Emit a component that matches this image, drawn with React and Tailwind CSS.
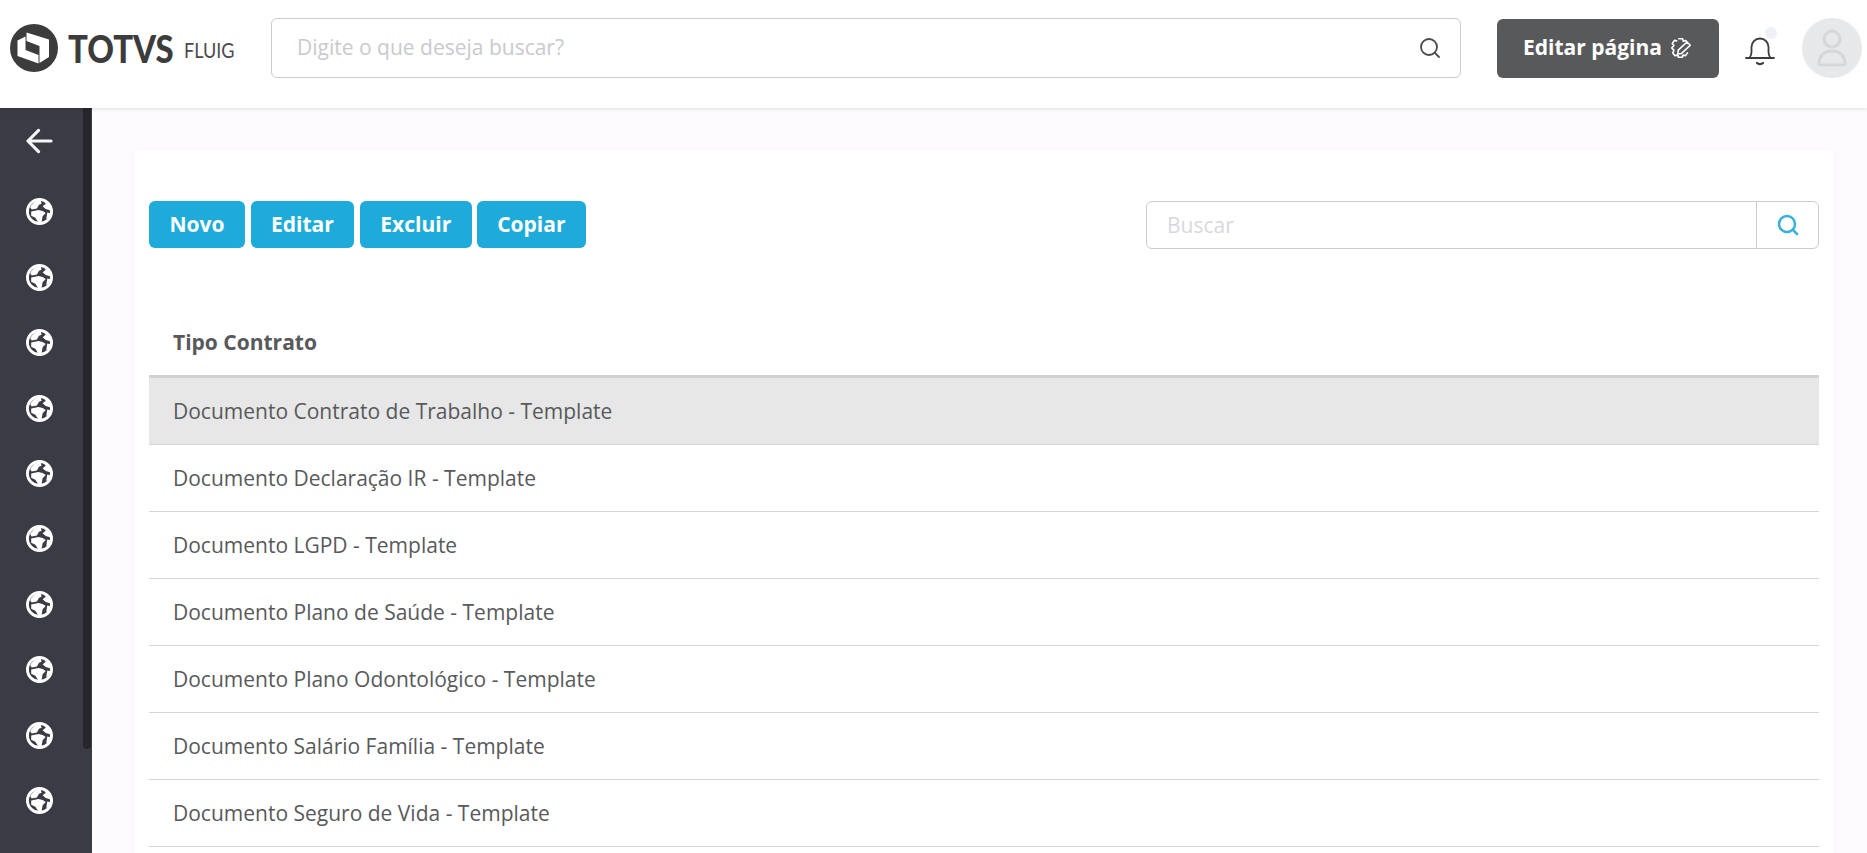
import { Search } from "lucide-react";

const ROWS = [
  "Documento Contrato de Trabalho - Template",
  "Documento Declaração IR - Template",
  "Documento LGPD - Template",
  "Documento Plano de Saúde - Template",
  "Documento Plano Odontológico - Template",
  "Documento Salário Família - Template",
  "Documento Seguro de Vida - Template",
];

const ACTIONS = ["Novo", "Editar", "Excluir", "Copiar"];

function Logo() {
  return (
    <svg width="48" height="48" viewBox="0 0 48 48" className="shrink-0">
      <circle cx="24" cy="24" r="24" fill="#3c3c3c" />
      <path d="M16.500 8.500 L39 15.500 L39 33 L29.500 39 L29.500 22 L16.500 17 Z" fill="#fff" />
      <path d="M7.500 16.500 L15.500 12.500 L15.500 26 L28.500 31 L28.500 39.500 L7.500 32 Z" fill="#fff" />
    </svg>
  );
}

function Globe() {
  return (
    <svg width="27" height="27" viewBox="0 0 26 26">
      <circle cx="13" cy="13" r="11.600" fill="none" stroke="#fff" strokeWidth="2.800" />
      <path d="M4 9 C6 5 10 2 14 2 L15 5.500 L12.500 6.500 L10.500 10 L5.500 11 Z" fill="#fff" />
      <path d="M17 3 L23 7 L24 12 L19 10.500 L16 8 L19 5.500 Z" fill="#fff" />
      <path d="M5 13 L12 11.500 L16 12.500 L19 14.500 L16 17.500 L15 23 L12.500 24.500 L9 19 L5 17 Z" fill="#fff" />
      <path d="M20.500 14 L24 15 L22 20 L19.500 20 Z" fill="#fff" />
    </svg>
  );
}

function EditGear() {
  return (
    <svg width="24" height="24" viewBox="0 0 22 22" fill="none" stroke="#fff" strokeWidth="1.500" strokeLinejoin="round" strokeLinecap="round">
      <path d="M9 2.500h3.500l.5 2.200 2.300-.6 1.700 2.600" />
      <path d="M7 4.500 5 4 3 7l1.500 1.700L2.500 11l2 2-1 2.500 2 2.500 2.500-.5.700 2h3.500l.6-2 2.400.5 1.700-2.500" />
      <path d="M8.500 13 16.500 5.500l3 3-8 7.500-3.500.5z" />
    </svg>
  );
}

export default function App() {
  return (
    <div className="h-screen overflow-hidden flex flex-col bg-[#fdfbfe] font-['Open_Sans',sans-serif] text-[#58595b]">
      <header className="h-[108px] shrink-0 bg-white flex items-center pl-[10px] pb-[12px] shadow-[0_1px_4px_rgba(0,0,0,0.12)] relative z-10">
        <Logo />
        <span className="ml-[10px] w-[106px] font-['Lato',sans-serif] font-black text-[37px] leading-none text-[#3c3c3c] origin-left scale-x-[0.89]">TOTVS</span>
        <span className="ml-[10px] mt-[4px] w-[51px] font-['Lato',sans-serif] text-[22px] leading-none text-[#4a4a4a] origin-left scale-x-[0.82]">FLUIG</span>
        <div className="ml-[36px] w-[1190px] h-[60px] border border-[#ccc] rounded-md flex items-center justify-between pl-[25px] pr-[18px]">
          <span className="text-[21px] text-[#c9cace]">Digite o que deseja buscar?</span>
          <Search size={24} strokeWidth={1.8} className="text-[#4a4a4a]" />
        </div>
        <button className="ml-[36px] w-[222px] h-[59px] rounded-md bg-[#58595b] text-white font-bold text-[21px] flex items-center justify-center gap-[7px]">
          Editar página <EditGear />
        </button>
        <div className="ml-[26px] mt-[4px] relative w-[30px] h-[32px]">
          <span className="absolute right-[-2px] top-[-7px] w-[12px] h-[12px] rounded-full bg-[#eef2f6]"></span>
          <svg width="30" height="32" viewBox="0 0 30 32" fill="none" stroke="#3c3c3c" strokeWidth="1.800" strokeLinecap="round" className="relative">
            <path d="M1 24h28M4.500 24c1.500-2 2-3 2-6v-5a8.500 8.500 0 0 1 17 0v5c0 3 .5 4 2 6" />
            <path d="M12 29c1.500 1.500 4.500 1.500 6 0" strokeWidth="2.200" />
          </svg>
        </div>
        <div className="ml-[27px] w-[60px] h-[60px] rounded-full bg-[#e7e8ea] flex items-center justify-center">
          <svg width="30" height="38" viewBox="0 0 30 38" fill="none" stroke="#d6d7da" strokeWidth="3">
            <circle cx="15" cy="10" r="8" />
            <path d="M2 35c0-7 4-13 13-13s13 6 13 13c0 1-1 1-2 1H4c-1 0-2 0-2-1z" />
          </svg>
        </div>
      </header>

      <div className="flex-1 flex min-h-0">
        <aside className="w-[92px] shrink-0 bg-[#3a3b45] relative">
          <span className="absolute right-[1px] top-0 w-[8px] h-[641px] rounded-b-md bg-[#26262c]"></span>
          <div className="w-[79px] h-[71.300px] pb-[6px] flex items-center justify-center">
            <svg width="27" height="26" viewBox="0 0 28 26" fill="none" stroke="#f4f5f8" strokeWidth="3.200" strokeLinecap="round" strokeLinejoin="round">
              <path d="M26 13H2M13 2 2 13l11 11" />
            </svg>
          </div>
          {Array.from({ length: 10 }).map((_, i) => (
            <div key={i} className="w-[79px] h-[65.400px] flex items-center justify-center">
              <Globe />
            </div>
          ))}
        </aside>

        <main className="flex-1 min-w-0 pt-[42px] pl-[42px] pr-[33px]">
          <div className="bg-white rounded-t-md shadow-[0_0_6px_rgba(0,0,0,0.04)] px-[15px] pt-[51px] pb-4">
            <div className="flex items-start justify-between">
              <div className="flex gap-[5.500px]">
                {ACTIONS.map((a) => (
                  <button key={a} className="h-[47px] px-[20.500px] last:px-[20px] rounded-md bg-[#1fabda] text-white font-bold text-[21px]">{a}</button>
                ))}
              </div>
              <div className="w-[673px] h-[48px] border border-[#ccc] rounded-md flex">
                <span className="flex-1 pl-[20px] text-[21px] leading-[46px] text-[#d8d9dd]">Buscar</span>
                <span className="w-[62px] border-l border-[#ccc] flex items-center justify-center">
                  <Search size={24} strokeWidth={2.500} className="text-[#36b1dc]" />
                </span>
              </div>
            </div>

            <div className="mt-[47px]">
              <div className="h-[82px] border-b-[3px] border-[#d2d2d2] flex items-center pt-[15px] pl-[24px] font-bold text-[21px]">Tipo Contrato</div>
              {ROWS.map((r, i) => (
                <div
                  key={r}
                  className={`h-[67px] border-b border-[#d5d5d5] flex items-center pt-[2px] pl-[24px] text-[21px] ${i === 0 ? "bg-[#e7e7e7]" : ""}`}
                >
                  {r}
                </div>
              ))}
            </div>
          </div>
        </main>
      </div>
    </div>
  );
}
